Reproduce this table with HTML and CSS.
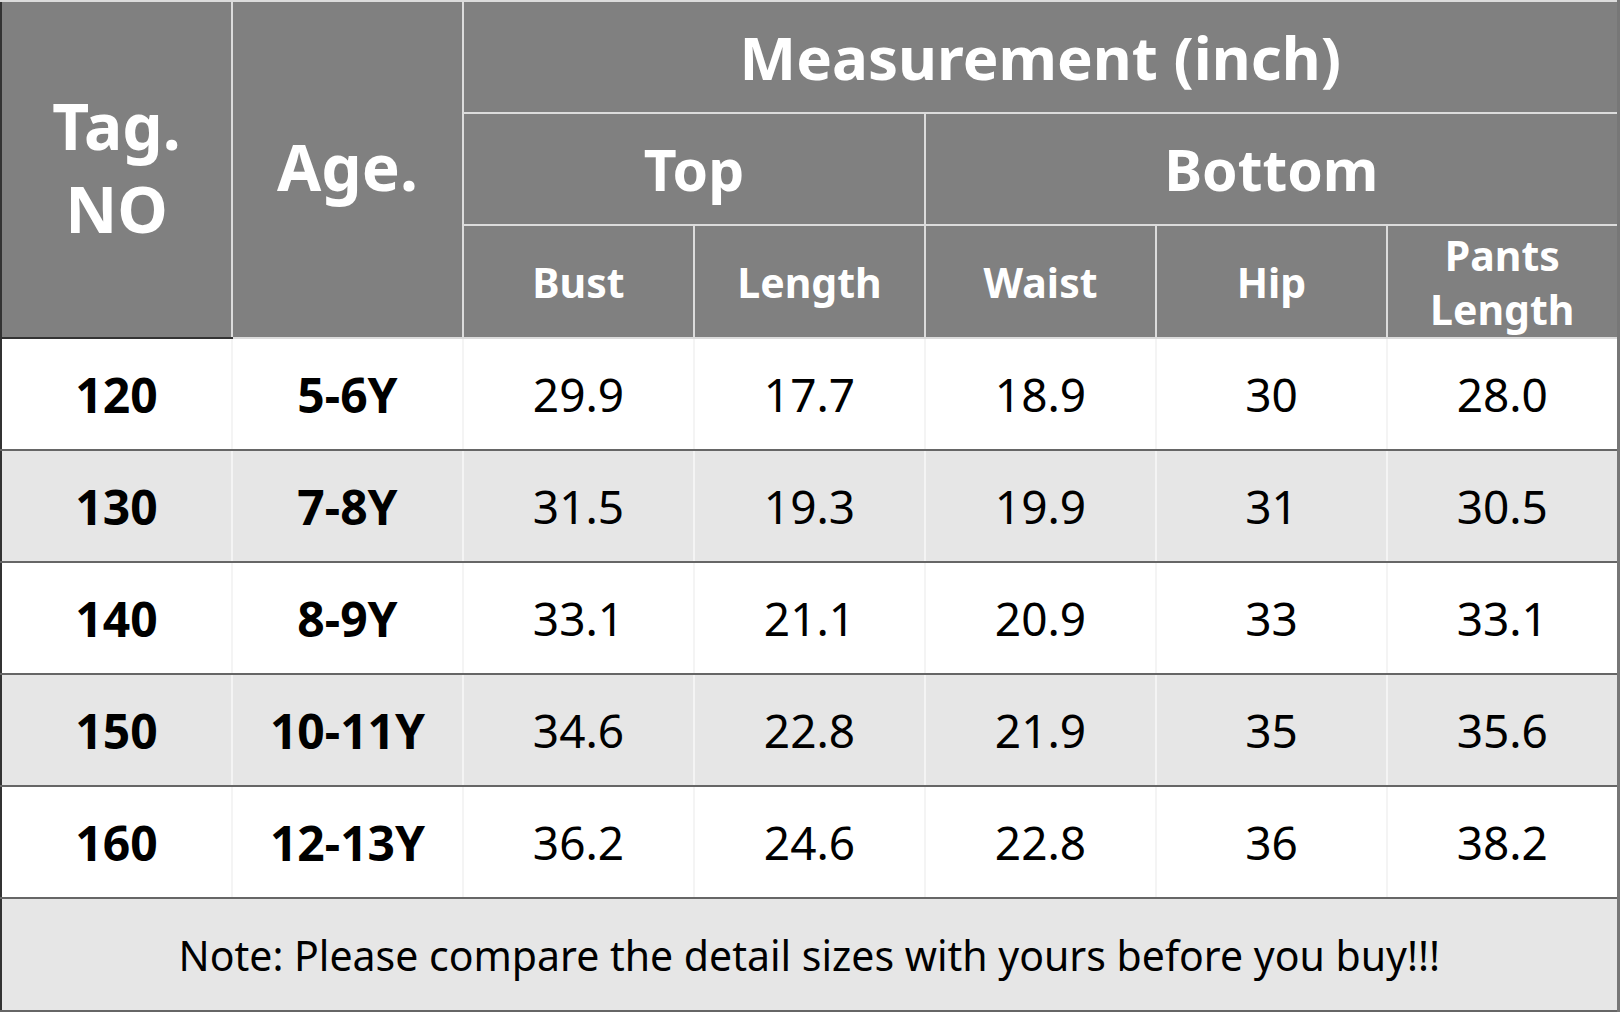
FILE: index.html
```html
<!DOCTYPE html>
<html>
<head>
<meta charset="utf-8">
<link rel="stylesheet" href="styles.css">
</head>
<body>
<table class="size-table">
  <colgroup>
    <col class="c"><col class="c"><col class="c"><col class="c"><col class="c"><col class="c"><col class="c">
  </colgroup>
  <thead>
    <tr class="h1">
      <th rowspan="3" class="big first">Tag.<br>NO</th>
      <th rowspan="3" class="big">Age.</th>
      <th colspan="5" class="title">Measurement (inch)</th>
    </tr>
    <tr class="h2">
      <th colspan="2" class="mid">Top</th>
      <th colspan="3" class="mid">Bottom</th>
    </tr>
    <tr class="h3">
      <th class="small">Bust</th>
      <th class="small">Length</th>
      <th class="small">Waist</th>
      <th class="small">Hip</th>
      <th class="small two">Pants<br>Length</th>
    </tr>
  </thead>
  <tbody>
    <tr class="odd"><td class="b">120</td><td class="b">5-6Y</td><td>29.9</td><td>17.7</td><td>18.9</td><td>30</td><td>28.0</td></tr>
    <tr class="even"><td class="b">130</td><td class="b">7-8Y</td><td>31.5</td><td>19.3</td><td>19.9</td><td>31</td><td>30.5</td></tr>
    <tr class="odd"><td class="b">140</td><td class="b">8-9Y</td><td>33.1</td><td>21.1</td><td>20.9</td><td>33</td><td>33.1</td></tr>
    <tr class="even"><td class="b">150</td><td class="b">10-11Y</td><td>34.6</td><td>22.8</td><td>21.9</td><td>35</td><td>35.6</td></tr>
    <tr class="odd"><td class="b">160</td><td class="b">12-13Y</td><td>36.2</td><td>24.6</td><td>22.8</td><td>36</td><td>38.2</td></tr>
    <tr class="note"><td colspan="7">Note: Please compare the detail sizes with yours before you buy!!!</td></tr>
  </tbody>
</table>
</body>
</html>
```
FILE: styles.css
```css
html, body {
  margin: 0;
  padding: 0;
  background: #ffffff;
}
body {
  width: 1620px;
  height: 1014px;
  overflow: hidden;
}
.size-table {
  table-layout: fixed;
  border-collapse: collapse;
  width: 1618px;
  font-family: "Noto Sans", "Open Sans", sans-serif;
  border-left: 2px solid #333333;
  border-top: 2px solid #444444;
  border-bottom: 2px solid #444444;
  border-right: 3px solid #777777;
}
.size-table col.c {
  width: 231px;
}
.size-table th {
  background: #808080;
  color: #ffffff;
  font-weight: 700;
  border: 2px solid #dcdcdc;
  padding: 0;
  text-align: center;
  vertical-align: middle;
}
.size-table th.first {
  border-left: 2px solid #333333;
  border-bottom-color: #333333;
}
.h1 { height: 112px; }
.h2 { height: 112px; }
.h3 { height: 113px; }
.big {
  font-size: 64px;
  line-height: 83px;
  padding-bottom: 6px;
}
.size-table th.big {
  padding-bottom: 6px;
}
.title {
  font-size: 60px;
  line-height: 80px;
}
.mid {
  font-size: 57px;
  line-height: 80px;
}
.small {
  font-size: 41px;
  line-height: 54px;
}
.size-table td {
  border-top: 2px solid #666666;
  border-bottom: 2px solid #666666;
  border-left: 2px solid #f4f4f4;
  border-right: 2px solid #f4f4f4;
  text-align: center;
  vertical-align: middle;
  padding: 0;
  font-size: 46px;
  color: #000000;
  font-weight: 400;
}
.size-table td:first-child {
  border-left: 2px solid #333333;
}
.size-table td.b {
  font-weight: 700;
  font-size: 48px;
}
.odd, .even {
  height: 112px;
}
.odd td { background: #ffffff; }
.even td { background: #e6e6e6; }
.note {
  height: 113px;
}
.note td {
  background: #e6e6e6;
  font-size: 41px;
  border-right: 3px solid #777777;
}
```
